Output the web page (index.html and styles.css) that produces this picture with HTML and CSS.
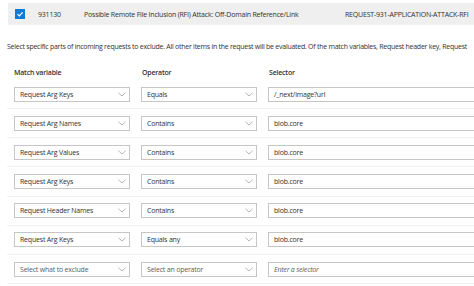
FILE: index.html
```html
<!DOCTYPE html>
<html>
<head>
<meta charset="utf-8">
<link rel="stylesheet" href="styles.css">
</head>
<body>
<div class="page">
  <div class="rule-bar">
    <span class="check"><svg viewBox="0 0 10 10" width="10" height="10"><path d="M2.5 5.2 L4.3 7 L7.6 3.4" fill="none" stroke="#fff" stroke-width="1.2"/></svg></span>
    <span class="rule-id">931130</span>
    <span class="rule-desc">Possible Remote File Inclusion (RFI) Attack: Off-Domain Reference/Link</span>
    <span class="rule-group">REQUEST-931-APPLICATION-ATTACK-RFI</span>
  </div>
  <p class="intro">Select specific parts of incoming requests to exclude. All other items in the request will be evaluated. Of the match variables, Request header key, Request</p>
  <div class="col-heads">
    <span class="col-a">Match variable</span>
    <span class="col-b">Operator</span>
    <span class="col-c">Selector</span>
  </div>
  <div class="rows">
    <div class="row">
      <div class="dd col-a"><span>Request Arg Keys</span><svg class="chev" viewBox="0 0 8 5"><path d="M0.5 0.8 L4 4 L7.5 0.8" /></svg></div>
      <div class="dd col-b"><span>Equals</span><svg class="chev" viewBox="0 0 8 5"><path d="M0.5 0.8 L4 4 L7.5 0.8" /></svg></div>
      <div class="inp col-c">/_next/image?url</div>
    </div>
    <div class="row">
      <div class="dd col-a"><span>Request Arg Names</span><svg class="chev" viewBox="0 0 8 5"><path d="M0.5 0.8 L4 4 L7.5 0.8" /></svg></div>
      <div class="dd col-b"><span>Contains</span><svg class="chev" viewBox="0 0 8 5"><path d="M0.5 0.8 L4 4 L7.5 0.8" /></svg></div>
      <div class="inp col-c">blob.core</div>
    </div>
    <div class="row">
      <div class="dd col-a"><span>Request Arg Values</span><svg class="chev" viewBox="0 0 8 5"><path d="M0.5 0.8 L4 4 L7.5 0.8" /></svg></div>
      <div class="dd col-b"><span>Contains</span><svg class="chev" viewBox="0 0 8 5"><path d="M0.5 0.8 L4 4 L7.5 0.8" /></svg></div>
      <div class="inp col-c">blob.core</div>
    </div>
    <div class="row">
      <div class="dd col-a"><span>Request Arg Keys</span><svg class="chev" viewBox="0 0 8 5"><path d="M0.5 0.8 L4 4 L7.5 0.8" /></svg></div>
      <div class="dd col-b"><span>Contains</span><svg class="chev" viewBox="0 0 8 5"><path d="M0.5 0.8 L4 4 L7.5 0.8" /></svg></div>
      <div class="inp col-c">blob.core</div>
    </div>
    <div class="row">
      <div class="dd col-a"><span>Request Header Names</span><svg class="chev" viewBox="0 0 8 5"><path d="M0.5 0.8 L4 4 L7.5 0.8" /></svg></div>
      <div class="dd col-b"><span>Contains</span><svg class="chev" viewBox="0 0 8 5"><path d="M0.5 0.8 L4 4 L7.5 0.8" /></svg></div>
      <div class="inp col-c">blob.core</div>
    </div>
    <div class="row">
      <div class="dd col-a"><span>Request Arg Keys</span><svg class="chev" viewBox="0 0 8 5"><path d="M0.5 0.8 L4 4 L7.5 0.8" /></svg></div>
      <div class="dd col-b"><span>Equals any</span><svg class="chev" viewBox="0 0 8 5"><path d="M0.5 0.8 L4 4 L7.5 0.8" /></svg></div>
      <div class="inp col-c">blob.core</div>
    </div>
    <div class="row">
      <div class="dd col-a placeholder"><span>Select what to exclude</span><svg class="chev" viewBox="0 0 8 5"><path d="M0.5 0.8 L4 4 L7.5 0.8" /></svg></div>
      <div class="dd col-b placeholder"><span>Select an operator</span><svg class="chev" viewBox="0 0 8 5"><path d="M0.5 0.8 L4 4 L7.5 0.8" /></svg></div>
      <div class="inp col-c placeholder italic">Enter a selector</div>
    </div>
  </div>
</div>
</body>
</html>
```

FILE: styles.css
```css
html, body {
  margin: 0;
  padding: 0;
  background: #ffffff;
}
body {
  width: 474px;
  height: 286px;
  overflow: hidden;
  font-family: "Open Sans", "Noto Sans", sans-serif;
  font-size: 7px;
  letter-spacing: -0.2px;
  color: #323130;
}
.page {
  padding: 3px 0 0 7px;
}
.rule-bar {
  display: flex;
  align-items: center;
  height: 22px;
  margin-left: 1px;
  background: #efefef;
  white-space: nowrap;
  overflow: hidden;
}
.check {
  display: flex;
  width: 10px;
  height: 10px;
  margin-left: 7px;
  background: #0f7bd6;
}
.rule-id {
  margin-left: 13px;
  width: 46px;
}
.rule-desc {
  width: 261px;
}
.rule-group {
  flex: none;
}
.intro {
  margin: 17px 0 0 0;
  white-space: nowrap;
  line-height: 10px;
  letter-spacing: -0.26px;
}
.col-heads {
  display: flex;
  margin-top: 13px;
  padding-left: 7px;
  height: 15px;
  align-items: center;
  font-weight: 600;
}
.col-heads span {
  flex: none;
}
.col-a { width: 116px; flex: none; }
.col-b { width: 116px; flex: none; margin-left: 11px; }
.col-c { flex: 1; margin-left: 11px; }
.col-heads .col-b { margin-left: 12px; }
.row {
  display: flex;
  align-items: center;
  height: 29.17px;
  box-sizing: border-box;
  padding-left: 7px;
  border-bottom: 1px solid #f2f2f2;
}
.dd, .inp {
  box-sizing: border-box;
  height: 15px;
  border: 1px solid #c8c6c4;
  background: #fff;
  display: flex;
  align-items: center;
  padding-left: 5px;
  white-space: nowrap;
  overflow: hidden;
}
.dd span {
  flex: 1;
}
.chev {
  width: 8px;
  height: 5px;
  margin-right: 3px;
  fill: none;
  stroke: #a19f9d;
  stroke-width: 0.8;
}
.inp {
  margin-right: -20px;
}
.placeholder {
  color: #605e5c;
}
.italic {
  font-style: italic;
}
```
